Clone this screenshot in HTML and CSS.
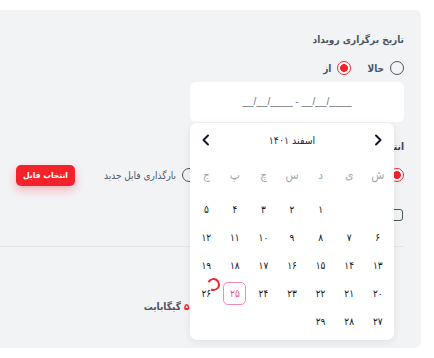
FILE: index.html
```html
<!DOCTYPE html>
<html lang="fa">
<head>
<meta charset="utf-8">
<link rel="stylesheet" href="styles.css">
</head>
<body>
<div class="panel">
  <div class="title">تاریخ برگزاری رویداد</div>
  <div class="radios">
    <label class="opt"><span class="radio"></span><span>حالا</span></label>
    <label class="opt"><span class="radio on"></span><span>از</span></label>
  </div>
  <div class="date-input"><span>__/__/____ - __/__/____</span></div>

  <div class="section-label">انتخاب فایل ویدیو</div>
  <div class="grid">
    <div class="cell"><span class="radio on"></span></div>
    <div class="cell between">
      <div class="opt"><span class="radio"></span><span class="txt">بارگذاری فایل جدید</span></div>
      <button class="btn">انتخاب فایل</button>
    </div>
    <div class="cell row2"><span class="check"></span></div>
    <div class="cell row2"></div>
  </div>
  <div class="divider"></div>
  <div class="grid bottom">
    <div class="cell"></div>
    <div class="cell"><span class="size"><b>۵۰</b> گیگابایت</span></div>
  </div>

  <div class="popup">
    <div class="cal-head">
      <svg class="chev" width="8" height="12" viewBox="0 0 8 12"><path d="M2 1.5 L6.5 6 L2 10.5" fill="none" stroke="#111827" stroke-width="2" stroke-linecap="round" stroke-linejoin="round"/></svg>
      <span class="month">اسفند ۱۴۰۱</span>
      <svg class="chev" width="8" height="12" viewBox="0 0 8 12"><path d="M6 1.5 L1.5 6 L6 10.5" fill="none" stroke="#111827" stroke-width="2" stroke-linecap="round" stroke-linejoin="round"/></svg>
    </div>
    <div class="week">
      <span>ش</span><span>ی</span><span>د</span><span>س</span><span>چ</span><span>پ</span><span>ج</span>
    </div>
    <div class="days">
      <span></span><span></span><span>۱</span><span>۲</span><span>۳</span><span>۴</span><span>۵</span>
      <span>۶</span><span>۷</span><span>۸</span><span>۹</span><span>۱۰</span><span>۱۱</span><span>۱۲</span>
      <span>۱۳</span><span>۱۴</span><span>۱۵</span><span>۱۶</span><span>۱۷</span><span>۱۸</span><span>۱۹</span>
      <span>۲۰</span><span>۲۱</span><span>۲۲</span><span>۲۳</span><span>۲۴</span><span><i class="today">۲۵</i></span><span>۲۶</span>
      <span>۲۷</span><span>۲۸</span><span>۲۹</span>
    </div>
    <div class="spinner"></div>
  </div>
</div>
</body>
</html>
```

FILE: styles.css
```css
* { box-sizing: border-box; }
html, body { margin: 0; padding: 0; background: #fff; }
body { font-family: "DejaVu Sans Condensed", "DejaVu Sans", sans-serif; }

.panel {
  direction: rtl;
  position: relative;
  margin-top: 10px;
  margin-left: 0;
  width: 421px;
  height: 338px;
  background: #f2f3f5;
  border-radius: 0 6px 6px 0;
  padding-top: 20px;
}
.title {
  height: 20px; line-height: 20px;
  margin-right: 17px;
  font-size: 10px; font-weight: bold; color: #4b5563;
}
.radios {
  display: flex; gap: 16px;
  height: 20px; margin-top: 8px; margin-right: 17px;
  align-items: center;
}
.opt { display: flex; align-items: center; gap: 6px; font-size: 10px; font-weight: bold; color: #4b5563; white-space: nowrap; }
.radio {
  width: 14px; height: 14px; border-radius: 50%;
  border: 1.5px solid #4b5563; display: inline-block; flex: none;
}
.radio.on {
  border: 1.5px solid #f5222d;
  background: radial-gradient(circle, #f5222d 0 3.6px, #fff 4.2px);
}
.date-input {
  margin-top: 4px; margin-right: 17px;
  width: 214px; height: 40px;
  background: #fff; border-radius: 6px;
  display: flex; align-items: center; justify-content: center;
  direction: ltr;
  font-family: "Liberation Sans", sans-serif; font-size: 10px; color: #6b7280;
  padding-bottom: 2px;
}
.section-label {
  margin-top: 15px; margin-right: 17px;
  height: 20px; line-height: 20px;
  font-size: 10px; font-weight: bold; color: #374151;
}
.grid {
  display: grid;
  grid-template-columns: 208px 1fr;
  margin-right: 17px;
  padding-left: 16px;
}
.cell { display: flex; align-items: center; gap: 6px; height: 22px; margin-top: 7px; white-space: nowrap; }
.cell.row2 { margin-top: 18px; }
.cell.between { justify-content: space-between; }
.opt .txt { font-weight: normal; }
.txt { font-size: 10px; color: #4b5563; }
.btn {
  border: 0; border-radius: 5px;
  background: #f4222a; color: #fff;
  font-family: inherit; font-size: 8.5px; font-weight: bold;
  width: 59px; height: 21px; padding: 0;
  box-shadow: 0 4px 10px rgba(244, 34, 42, 0.3);
}
.check {
  width: 12px; height: 12px; border: 1.5px solid #4b5563; border-radius: 3px;
  display: inline-block; margin-right: 1px;
}
.divider { margin-top: 20px; margin-right: 17px; height: 1px; background: #e3e5e8; }
.grid.bottom .cell { height: 20px; margin-top: 49px; }
.size { font-size: 10px; font-weight: bold; color: #4b5563; margin-right: 1px; }
.size b { color: #f4222a; }

.popup {
  position: absolute; left: 190px; top: 113px;
  width: 204px; height: 217px;
  background: #fff; border-radius: 7px;
  box-shadow: 0 2px 10px rgba(0,0,0,0.07);
  padding: 7px 2px 5px;
}
.cal-head {
  display: grid; grid-template-columns: repeat(7, 1fr);
  height: 20px; align-items: center; justify-items: center;
}
.chev { display: block; }
.month { grid-column: span 5; font-size: 10.5px; color: #1f2937; }
.week {
  display: grid; grid-template-columns: repeat(7, 1fr);
  margin-top: 11px; height: 28px; align-items: center; text-align: center;
  font-size: 12px; color: #a3a8b0;
}
.days {
  display: grid; grid-template-columns: repeat(7, 1fr);
  grid-auto-rows: 28px; margin-top: 6px;
  align-items: center; justify-items: center;
  font-size: 10px; color: #111827;
}
.today {
  font-style: normal; width: 23px; height: 23px;
  display: flex; align-items: center; justify-content: center;
  border: 1px solid #f38bb8; border-radius: 5px; color: #ec4f8d;
}
.spinner {
  position: absolute; left: 17px; top: 155px;
  width: 13px; height: 13px; border-radius: 50%;
  border: 2.5px solid #f5222d; border-left-color: transparent;
  transform: rotate(-20deg);
}
```
